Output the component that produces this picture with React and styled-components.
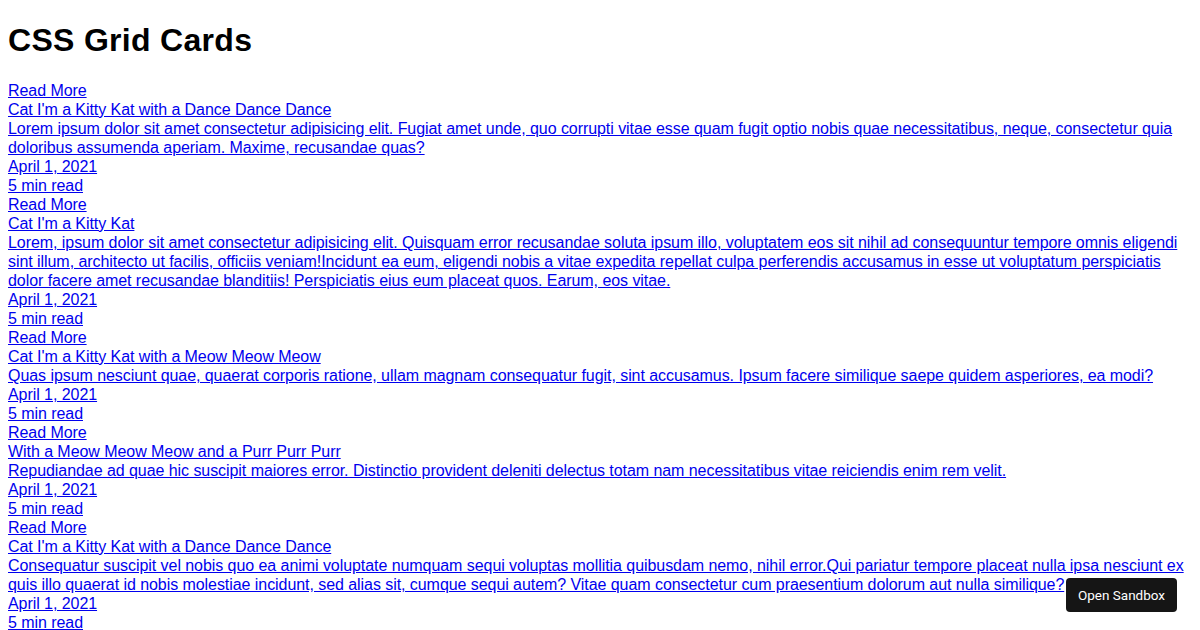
import React from 'react';
import styled, { createGlobalStyle } from 'styled-components';

const GlobalStyle = createGlobalStyle`
  body {
    margin: 8px;
    font-family: "Liberation Sans", Arial, sans-serif;
    font-size: 16px;
    line-height: 19px;
    background: #fff;
    color: #000;
  }
`

const Title = styled.h1`
  font-size: 32px;
  line-height: 37px;
  font-weight: bold;
  letter-spacing: 0.3px;
  margin: 14.44px 0 21.44px;
`

const Grid = styled.div`
  display: grid;
`

const Card = styled.a`
  display: block;
  color: #0000ee;
  text-decoration: underline;
  letter-spacing: -0.06px;
  cursor: pointer;
`

const Line = styled.div``

const SandboxButton = styled.button`
  position: fixed;
  right: 23px;
  bottom: 18px;
  width: 111px;
  height: 34px;
  border: none;
  border-radius: 4px;
  background: #151515;
  color: #fff;
  font-family: Roboto, "Liberation Sans", sans-serif;
  font-size: 13.5px;
  cursor: pointer;
`

const cards = [
  {
    title: 'Cat I\'m a Kitty Kat with a Dance Dance Dance',
    text: 'Lorem ipsum dolor sit amet consectetur adipisicing elit. Fugiat amet unde, quo corrupti vitae esse quam fugit optio nobis quae necessitatibus, neque, consectetur quia doloribus assumenda aperiam. Maxime, recusandae quas?',
  },
  {
    title: 'Cat I\'m a Kitty Kat',
    text: 'Lorem, ipsum dolor sit amet consectetur adipisicing elit. Quisquam error recusandae soluta ipsum illo, voluptatem eos sit nihil ad consequuntur tempore omnis eligendi sint illum, architecto ut facilis, officiis veniam!Incidunt ea eum, eligendi nobis a vitae expedita repellat culpa perferendis accusamus in esse ut voluptatum perspiciatis dolor facere amet recusandae blanditiis! Perspiciatis eius eum placeat quos. Earum, eos vitae.',
  },
  {
    title: 'Cat I\'m a Kitty Kat with a Meow Meow Meow',
    text: 'Quas ipsum nesciunt quae, quaerat corporis ratione, ullam magnam consequatur fugit, sint accusamus. Ipsum facere similique saepe quidem asperiores, ea modi?',
  },
  {
    title: 'With a Meow Meow Meow and a Purr Purr Purr',
    text: 'Repudiandae ad quae hic suscipit maiores error. Distinctio provident deleniti delectus totam nam necessitatibus vitae reiciendis enim rem velit.',
  },
  {
    title: 'Cat I\'m a Kitty Kat with a Dance Dance Dance',
    text: 'Consequatur suscipit vel nobis quo ea animi voluptate numquam sequi voluptas mollitia quibusdam nemo, nihil error.Qui pariatur tempore placeat nulla ipsa nesciunt ex quis illo quaerat id nobis molestiae incidunt, sed alias sit, cumque sequi autem? Vitae quam consectetur cum praesentium dolorum aut nulla similique?',
  },
]

const App = () => {
  return (
    <>
      <GlobalStyle />
      <Title>CSS Grid Cards</Title>
      <Grid>
        {cards.map((card, i) => (
          <Card key={i} href="#">
            <Line>Read More</Line>
            <Line>{card.title}</Line>
            <Line>{card.text}</Line>
            <Line>April 1, 2021</Line>
            <Line>5 min read</Line>
          </Card>
        ))}
      </Grid>
      <SandboxButton>Open Sandbox</SandboxButton>
    </>
  )
}

export default App;
